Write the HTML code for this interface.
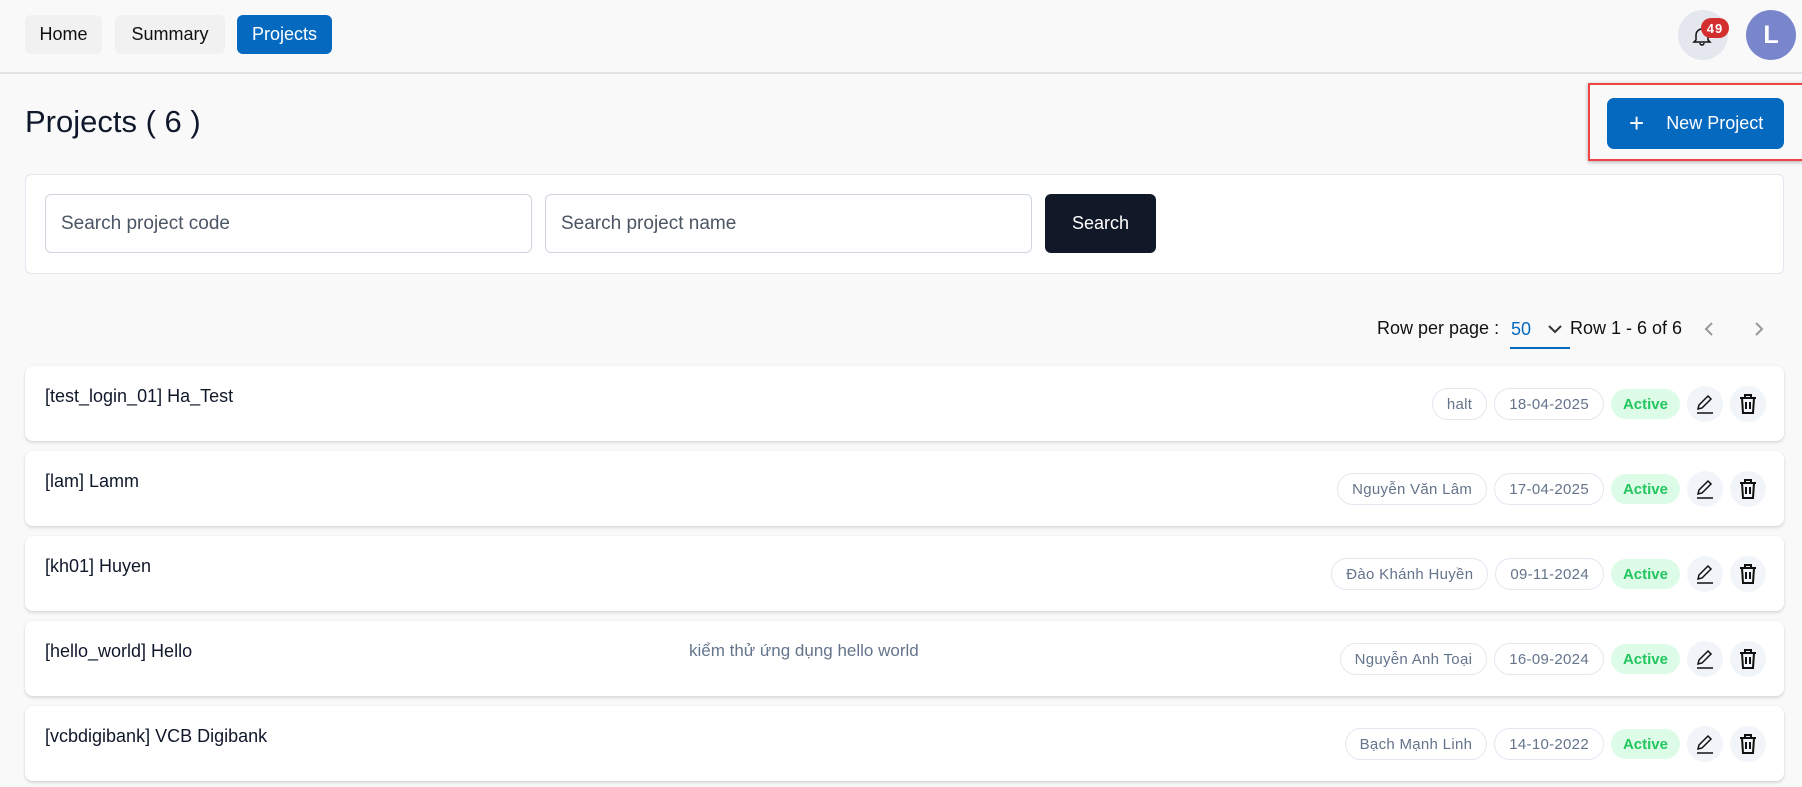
<!DOCTYPE html>
<html><head><meta charset="utf-8"><style>
*{box-sizing:border-box;margin:0;padding:0}
body{width:1802px;height:787px;overflow:hidden;background:#f9f9fa;font-family:"Liberation Sans",sans-serif;color:#0f172a;position:relative}
.a{position:absolute}
.nav{top:15px;height:39px;border-radius:6px;background:#f1f1f2;font-size:18px;display:flex;align-items:center;justify-content:center;color:#111}
.line{top:72px;left:0;width:1802px;height:2px;background:#e2e2e4}
.inp{top:194px;height:59px;border:1px solid #cfd6e0;border-radius:6px;background:#fff;font-size:19px;color:#4b5563;padding-left:15px;display:flex;align-items:center}
.row{left:25px;width:1759px;height:75px;background:#fff;border-radius:8px;box-shadow:0 2px 3px rgba(0,0,0,.12),0 0 2px rgba(0,0,0,.06)}
.title{position:absolute;left:20px;top:20px;font-size:18px;color:#0f172a}
.chips{position:absolute;right:18px;top:20px;display:flex;align-items:center;gap:7px;height:36px}
.chip{height:32px;border:1.5px solid #e2e8f0;border-radius:16px;padding:0 14px;font-size:15px;color:#64748b;display:flex;align-items:center;letter-spacing:.3px}
.act{height:30px;border-radius:15px;background:#dcfce7;color:#22c55e;font-weight:bold;font-size:15px;padding:0 12px;display:flex;align-items:center}
.ic{width:36px;height:36px;border-radius:50%;background:#f1f5f9;display:flex;align-items:center;justify-content:center}
</style></head><body>
<div class="a nav" style="left:25px;width:77px">Home</div>
<div class="a nav" style="left:115px;width:110px">Summary</div>
<div class="a nav" style="left:237px;width:95px;background:#0569bf;color:#fff">Projects</div>
<div class="a" style="left:1678px;top:10px;width:50px;height:50px;border-radius:50%;background:#e5e7ee"></div>
<svg class="a" style="left:1690px;top:24px" width="24" height="24" viewBox="0 0 24 24" fill="none" stroke="#111" stroke-width="1.5"><path d="M6 16V11a6 6 0 0 1 12 0v5l2 2H4z"/><path d="M10 19a2 2 0 0 0 4 0"/></svg>
<div class="a" style="left:1701px;top:18px;width:28px;height:20px;border-radius:10px;background:#d32f2f;color:#fff;font-size:13px;font-weight:bold;display:flex;align-items:center;justify-content:center;letter-spacing:1px">49</div>
<div class="a" style="left:1746px;top:10px;width:50px;height:50px;border-radius:50%;background:#7986cb;color:#fff;font-size:25px;font-weight:bold;display:flex;align-items:center;justify-content:center">L</div>
<div class="a line"></div>
<div class="a" style="left:25px;top:104px;font-size:31px;color:#0f172a">Projects ( 6 )</div>
<div class="a" style="left:1588px;top:83px;width:216px;height:78px;border:2.5px solid #ef4444;box-shadow:0 1px 4px rgba(0,0,0,.3)"></div>
<div class="a" style="left:1607px;top:98px;width:177px;height:51px;background:#0569bf;border-radius:7px;color:#fff;font-size:18px;display:flex;align-items:center"><span style="font-size:26px;margin-left:22px;margin-right:22px;font-weight:300">+</span>New Project</div>
<div class="a" style="left:25px;top:174px;width:1759px;height:100px;background:#fff;border:1px solid #e2e8f0;border-radius:6px"></div>
<div class="a inp" style="left:45px;width:487px">Search project code</div>
<div class="a inp" style="left:545px;width:487px">Search project name</div>
<div class="a" style="left:1045px;top:194px;width:111px;height:59px;background:#111827;border-radius:6px;color:#fff;font-size:18px;display:flex;align-items:center;justify-content:center">Search</div>
<div class="a" style="left:1377px;top:318px;font-size:18px;color:#111">Row per page :</div>
<div class="a" style="left:1511px;top:319px;font-size:18px;color:#0569bf">50</div>
<svg class="a" style="left:1546px;top:321px" width="18" height="16" viewBox="0 0 18 16"><path d="M3 5l6 6 6-6" fill="none" stroke="#333" stroke-width="2"/></svg>
<div class="a" style="left:1510px;top:347px;width:60px;height:2px;background:#0569bf"></div>
<div class="a" style="left:1570px;top:318px;font-size:18px;color:#111">Row 1 - 6 of 6</div>
<svg class="a" style="left:1702px;top:320px" width="14" height="18"><path d="M10 3L4 9l6 6" fill="none" stroke="#999" stroke-width="2"/></svg>
<svg class="a" style="left:1752px;top:320px" width="14" height="18"><path d="M4 3l6 6-6 6" fill="none" stroke="#999" stroke-width="2"/></svg>

<div class="a row" style="top:366px"><div class="title">[test_login_01] Ha_Test</div><div class="chips"><div class="chip">halt</div><div class="chip">18-04-2025</div><div class="act">Active</div><div class="ic"><svg width="24" height="24" viewBox="0 0 24 24" fill="none" stroke="#111" stroke-width="1.5"><path d="M15 4l3 3-9 9-4 1 1-4z"/><path d="M4 21h16"/></svg></div><div class="ic"><svg width="22" height="24" viewBox="0 0 22 24" fill="none" stroke="#111" stroke-width="2"><path d="M3 6h16M8 6V3h6v3M5 6l1 15h10l1-15M9 10v7M13 10v7"/></svg></div></div></div>
<div class="a row" style="top:451px"><div class="title">[lam] Lamm</div><div class="chips"><div class="chip">Nguyễn Văn Lâm</div><div class="chip">17-04-2025</div><div class="act">Active</div><div class="ic"><svg width="24" height="24" viewBox="0 0 24 24" fill="none" stroke="#111" stroke-width="1.5"><path d="M15 4l3 3-9 9-4 1 1-4z"/><path d="M4 21h16"/></svg></div><div class="ic"><svg width="22" height="24" viewBox="0 0 22 24" fill="none" stroke="#111" stroke-width="2"><path d="M3 6h16M8 6V3h6v3M5 6l1 15h10l1-15M9 10v7M13 10v7"/></svg></div></div></div>
<div class="a row" style="top:536px"><div class="title">[kh01] Huyen</div><div class="chips"><div class="chip">Đào Khánh Huyền</div><div class="chip">09-11-2024</div><div class="act">Active</div><div class="ic"><svg width="24" height="24" viewBox="0 0 24 24" fill="none" stroke="#111" stroke-width="1.5"><path d="M15 4l3 3-9 9-4 1 1-4z"/><path d="M4 21h16"/></svg></div><div class="ic"><svg width="22" height="24" viewBox="0 0 22 24" fill="none" stroke="#111" stroke-width="2"><path d="M3 6h16M8 6V3h6v3M5 6l1 15h10l1-15M9 10v7M13 10v7"/></svg></div></div></div>
<div class="a row" style="top:621px"><div class="title">[hello_world] Hello</div><div style="position:absolute;left:664px;top:20px;font-size:17px;color:#64748b">kiểm thử ứng dụng hello world</div><div class="chips"><div class="chip">Nguyễn Anh Toại</div><div class="chip">16-09-2024</div><div class="act">Active</div><div class="ic"><svg width="24" height="24" viewBox="0 0 24 24" fill="none" stroke="#111" stroke-width="1.5"><path d="M15 4l3 3-9 9-4 1 1-4z"/><path d="M4 21h16"/></svg></div><div class="ic"><svg width="22" height="24" viewBox="0 0 22 24" fill="none" stroke="#111" stroke-width="2"><path d="M3 6h16M8 6V3h6v3M5 6l1 15h10l1-15M9 10v7M13 10v7"/></svg></div></div></div>
<div class="a row" style="top:706px"><div class="title">[vcbdigibank] VCB Digibank</div><div class="chips"><div class="chip">Bạch Mạnh Linh</div><div class="chip">14-10-2022</div><div class="act">Active</div><div class="ic"><svg width="24" height="24" viewBox="0 0 24 24" fill="none" stroke="#111" stroke-width="1.5"><path d="M15 4l3 3-9 9-4 1 1-4z"/><path d="M4 21h16"/></svg></div><div class="ic"><svg width="22" height="24" viewBox="0 0 22 24" fill="none" stroke="#111" stroke-width="2"><path d="M3 6h16M8 6V3h6v3M5 6l1 15h10l1-15M9 10v7M13 10v7"/></svg></div></div></div>
</body></html>
